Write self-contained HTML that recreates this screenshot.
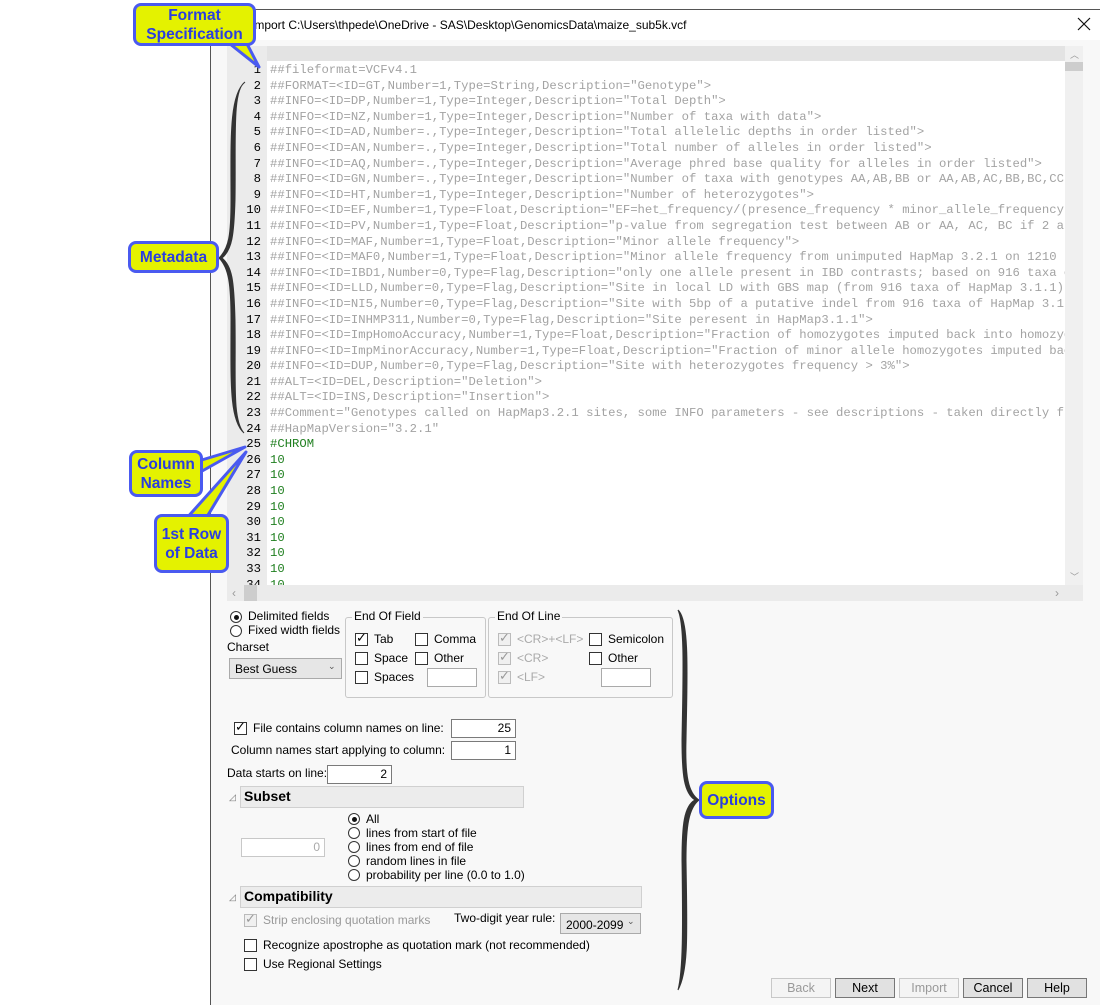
<!DOCTYPE html>
<html><head><meta charset="utf-8">
<style>
*{margin:0;padding:0;box-sizing:border-box}
body{width:1100px;height:1005px;background:#fff;position:relative;overflow:hidden;font-family:"Liberation Sans",sans-serif;font-size:12px;color:#000}
.abs{position:absolute}
#win{left:210px;top:9px;width:890px;height:996px;border:1px solid #555;border-right:none;border-bottom:none;background:#f8f8f8}
#title{left:211px;top:10px;width:889px;height:30px;background:#fff;font-size:12px}
#gut{left:227px;top:46px;width:40px;height:539px;background:#ebebeb}
#hdr{left:267px;top:46px;width:798px;height:15px;background:#e3e3e3}
#txt{left:267px;top:61px;width:798px;height:524px;background:#fff;overflow:hidden}
.ln{position:absolute;font-family:"Liberation Mono",monospace;font-size:12.25px;line-height:15.6px;white-space:pre}
#nums{left:227px;top:63px;width:34px;text-align:right;color:#000;height:522px;overflow:hidden}
#code{left:270px;top:63px;color:#a3a3a3;width:795px;height:522px;overflow:hidden}
.g{color:#1f7f1f}
#vs{left:1065px;top:46px;width:18px;height:539px;background:#f0f0f0}
#hs{left:227px;top:585px;width:856px;height:16px;background:#ebebeb}
.cb{position:absolute;width:13px;height:13px;border:1px solid #333;background:#fff}
.cb.d{border-color:#bbb;background:#f0f0f0}
.rb{position:absolute;width:12px;height:12px;border:1px solid #333;border-radius:50%;background:#fff}
.rb.on::after{content:"";position:absolute;left:2.5px;top:2.5px;width:5px;height:5px;border-radius:50%;background:#111}
.t{position:absolute;white-space:nowrap}
.inp{position:absolute;background:#fff;border:1px solid #7a7a7a;text-align:right;padding-right:4px;font-size:12px;line-height:16px}
.grp{position:absolute;border:1px solid #c8c8c8;border-radius:3px}
.btn{position:absolute;width:60px;height:20px;border:1px solid #777;background:#e1e1e1;text-align:center;font-size:12.5px;line-height:18px}
.btn.dis{border-color:#c8c8c8;background:#f4f4f4;color:#999}
.sec{position:absolute;background:#ececec;border:1px solid #d0d0d0;font-weight:bold;font-size:14px;line-height:19px;padding-left:3px}
.tri{position:absolute;font-size:9px;color:#777}
.co{position:absolute;background:#e4f200;border:3px solid #4a5af0;border-radius:8px;color:#2a3ee0;font-weight:bold;font-size:15.5px;text-align:center;line-height:19px;display:flex;align-items:center;justify-content:center}
</style></head><body>
<div id="win" class="abs"></div>
<div id="title" class="abs"><span class="t" style="left:40px;top:8px">Import C:\Users\thpede\OneDrive - SAS\Desktop\GenomicsData\maize_sub5k.vcf</span>
<svg class="abs" style="left:866px;top:7px" width="14" height="14"><path d="M1,1 L13,13 M13,1 L1,13" stroke="#111" stroke-width="1.2"/></svg></div>
<div id="gut" class="abs"></div>
<div id="hdr" class="abs"></div>
<div id="txt" class="abs"></div>
<div id="vs" class="abs"><div class="abs" style="left:0;top:16px;width:18px;height:9px;background:#cdcdcd"></div><span class="t" style="left:5px;top:2px;font-size:9px;color:#999">︿</span><span class="t" style="left:5px;top:524px;font-size:9px;color:#999">﹀</span></div>
<div id="hs" class="abs"><div class="abs" style="left:17px;top:0;width:13px;height:16px;background:#cdcdcd"></div><span class="t" style="left:5px;top:1px;color:#999">‹</span><span class="t" style="left:828px;top:1px;color:#999">›</span></div>
<div id="nums" class="ln">1
2
3
4
5
6
7
8
9
10
11
12
13
14
15
16
17
18
19
20
21
22
23
24
25
26
27
28
29
30
31
32
33
34</div>
<div id="code" class="ln">##fileformat=VCFv4.1
##FORMAT=&lt;ID=GT,Number=1,Type=String,Description="Genotype"&gt;
##INFO=&lt;ID=DP,Number=1,Type=Integer,Description="Total Depth"&gt;
##INFO=&lt;ID=NZ,Number=1,Type=Integer,Description="Number of taxa with data"&gt;
##INFO=&lt;ID=AD,Number=.,Type=Integer,Description="Total allelelic depths in order listed"&gt;
##INFO=&lt;ID=AN,Number=.,Type=Integer,Description="Total number of alleles in order listed"&gt;
##INFO=&lt;ID=AQ,Number=.,Type=Integer,Description="Average phred base quality for alleles in order listed"&gt;
##INFO=&lt;ID=GN,Number=.,Type=Integer,Description="Number of taxa with genotypes AA,AB,BB or AA,AB,AC,BB,BC,CC in order"&gt;
##INFO=&lt;ID=HT,Number=1,Type=Integer,Description="Number of heterozygotes"&gt;
##INFO=&lt;ID=EF,Number=1,Type=Float,Description="EF=het_frequency/(presence_frequency * minor_allele_frequency)"&gt;
##INFO=&lt;ID=PV,Number=1,Type=Float,Description="p-value from segregation test between AB or AA, AC, BC if 2 alleles"&gt;
##INFO=&lt;ID=MAF,Number=1,Type=Float,Description="Minor allele frequency"&gt;
##INFO=&lt;ID=MAF0,Number=1,Type=Float,Description="Minor allele frequency from unimputed HapMap 3.2.1 on 1210 taxa"&gt;
##INFO=&lt;ID=IBD1,Number=0,Type=Flag,Description="only one allele present in IBD contrasts; based on 916 taxa of"&gt;
##INFO=&lt;ID=LLD,Number=0,Type=Flag,Description="Site in local LD with GBS map (from 916 taxa of HapMap 3.1.1)"&gt;
##INFO=&lt;ID=NI5,Number=0,Type=Flag,Description="Site with 5bp of a putative indel from 916 taxa of HapMap 3.1.1"&gt;
##INFO=&lt;ID=INHMP311,Number=0,Type=Flag,Description="Site peresent in HapMap3.1.1"&gt;
##INFO=&lt;ID=ImpHomoAccuracy,Number=1,Type=Float,Description="Fraction of homozygotes imputed back into homozygotes"&gt;
##INFO=&lt;ID=ImpMinorAccuracy,Number=1,Type=Float,Description="Fraction of minor allele homozygotes imputed back"&gt;
##INFO=&lt;ID=DUP,Number=0,Type=Flag,Description="Site with heterozygotes frequency &gt; 3%"&gt;
##ALT=&lt;ID=DEL,Description="Deletion"&gt;
##ALT=&lt;ID=INS,Description="Insertion"&gt;
##Comment="Genotypes called on HapMap3.2.1 sites, some INFO parameters - see descriptions - taken directly from"
##HapMapVersion="3.2.1"
<span class="g">#CHROM
10
10
10
10
10
10
10
10
10</span></div>

<div class="rb on" style="left:230px;top:611px"></div><span class="t" style="left:248px;top:609px">Delimited fields</span>
<div class="rb" style="left:230px;top:625px"></div><span class="t" style="left:248px;top:623px">Fixed width fields</span>
<span class="t" style="left:227px;top:640px">Charset</span>
<div class="abs" style="left:229px;top:658px;width:113px;height:21px;border:1px solid #aaa;background:#e6e6e6"><span class="t" style="left:5px;top:3px">Best Guess</span><span class="t" style="left:98px;top:2px;font-size:9px;color:#555">⌄</span></div>

<div class="grp" style="left:345px;top:617px;width:141px;height:81px"></div>
<span class="t" style="left:352px;top:609px;background:#f8f8f8;padding:0 2px">End Of Field</span>
<div class="cb" style="left:355px;top:633px"></div><span class="t" style="left:356px;top:630px;font-size:13px">✓</span><span class="t" style="left:374px;top:632px">Tab</span>
<div class="cb" style="left:415px;top:633px"></div><span class="t" style="left:434px;top:632px">Comma</span>
<div class="cb" style="left:355px;top:652px"></div><span class="t" style="left:374px;top:651px">Space</span>
<div class="cb" style="left:415px;top:652px"></div><span class="t" style="left:434px;top:651px">Other</span>
<div class="cb" style="left:355px;top:671px"></div><span class="t" style="left:374px;top:670px">Spaces</span>
<div class="inp" style="left:427px;top:668px;width:50px;height:19px;border-color:#aaa"></div>

<div class="grp" style="left:488px;top:617px;width:185px;height:81px"></div>
<span class="t" style="left:495px;top:609px;background:#f8f8f8;padding:0 2px">End Of Line</span>
<div class="cb d" style="left:498px;top:633px"></div><span class="t" style="left:499px;top:630px;font-size:13px;color:#999">✓</span><span class="t" style="left:517px;top:632px;color:#aaa">&lt;CR&gt;+&lt;LF&gt;</span>
<div class="cb" style="left:589px;top:633px"></div><span class="t" style="left:608px;top:632px">Semicolon</span>
<div class="cb d" style="left:498px;top:652px"></div><span class="t" style="left:499px;top:649px;font-size:13px;color:#999">✓</span><span class="t" style="left:517px;top:651px;color:#aaa">&lt;CR&gt;</span>
<div class="cb" style="left:589px;top:652px"></div><span class="t" style="left:608px;top:651px">Other</span>
<div class="cb d" style="left:498px;top:671px"></div><span class="t" style="left:499px;top:668px;font-size:13px;color:#999">✓</span><span class="t" style="left:517px;top:670px;color:#aaa">&lt;LF&gt;</span>
<div class="inp" style="left:601px;top:668px;width:50px;height:19px;border-color:#aaa"></div>

<div class="cb" style="left:234px;top:722px"></div><span class="t" style="left:235px;top:719px;font-size:13px">✓</span>
<span class="t" style="left:253px;top:721px">File contains column names on line:</span>
<div class="inp" style="left:451px;top:719px;width:65px;height:19px">25</div>
<span class="t" style="left:231px;top:743px">Column names start applying to column:</span>
<div class="inp" style="left:451px;top:741px;width:65px;height:19px">1</div>
<span class="t" style="left:227px;top:766px">Data starts on line:</span>
<div class="inp" style="left:327px;top:765px;width:65px;height:19px">2</div>

<span class="tri" style="left:229px;top:792px">◿</span>
<div class="sec" style="left:240px;top:786px;width:284px;height:22px">Subset</div>
<div class="rb on" style="left:348px;top:813px"></div><span class="t" style="left:366px;top:812px">All</span>
<div class="rb" style="left:348px;top:827px"></div><span class="t" style="left:366px;top:826px">lines from start of file</span>
<div class="rb" style="left:348px;top:841px"></div><span class="t" style="left:366px;top:840px">lines from end of file</span>
<div class="rb" style="left:348px;top:855px"></div><span class="t" style="left:366px;top:854px">random lines in file</span>
<div class="rb" style="left:348px;top:869px"></div><span class="t" style="left:366px;top:868px">probability per line (0.0 to 1.0)</span>
<div class="inp" style="left:241px;top:838px;width:84px;height:19px;border-color:#c8c8c8;color:#aaa">0</div>

<span class="tri" style="left:229px;top:892px">◿</span>
<div class="sec" style="left:240px;top:886px;width:402px;height:22px">Compatibility</div>
<div class="cb d" style="left:244px;top:914px"></div><span class="t" style="left:245px;top:911px;font-size:13px;color:#999">✓</span>
<span class="t" style="left:263px;top:913px;color:#999">Strip enclosing quotation marks</span>
<span class="t" style="left:454px;top:911px">Two-digit year rule:</span>
<div class="abs" style="left:560px;top:913px;width:81px;height:21px;border:1px solid #aaa;background:#e6e6e6"><span class="t" style="left:5px;top:4px">2000-2099</span><span class="t" style="left:66px;top:2px;font-size:9px;color:#555">⌄</span></div>
<div class="cb" style="left:244px;top:939px"></div><span class="t" style="left:263px;top:938px">Recognize apostrophe as quotation mark (not recommended)</span>
<div class="cb" style="left:244px;top:958px"></div><span class="t" style="left:263px;top:957px">Use Regional Settings</span>

<div class="btn dis" style="left:771px;top:978px">Back</div>
<div class="btn" style="left:835px;top:978px">Next</div>
<div class="btn dis" style="left:899px;top:978px">Import</div>
<div class="btn" style="left:963px;top:978px">Cancel</div>
<div class="btn" style="left:1027px;top:978px">Help</div>

<svg class="abs" style="left:0;top:0" width="1100" height="1005">
<g fill="#e4f200" stroke="#4a5af0" stroke-width="3" stroke-linejoin="round">
<polygon points="225,40 245,40 259,67"/>
<polygon points="195,462 195,475 245,447"/>
<polygon points="185,520 205,520 246,452"/>
</g>
<g fill="#333" stroke="#333" stroke-width="1">
<path d="M245,82 C232,90 236,140 235,200 C234,235 232,250 222,258 C232,266 234,280 235,320 C236,380 232,420 244,433 C229,420 231,380 231,320 C231,285 229,268 219,258 C229,248 231,235 231,200 C231,140 229,95 245,82Z"/>
<path d="M678,610 C690,620 687,680 686,740 C685,775 688,793 699,800 C689,808 686,825 686,860 C687,930 689,970 678,990 C683,970 683,930 682,860 C682,825 684,806 695,800 C684,793 682,775 682,740 C683,680 685,625 678,610Z"/>
</g>
</svg>
<div class="co" style="left:133px;top:3px;width:123px;height:43px">Format<br>Specification</div>
<div class="co" style="left:128px;top:241px;width:91px;height:32px">Metadata</div>
<div class="co" style="left:129px;top:450px;width:74px;height:47px">Column<br>Names</div>
<div class="co" style="left:154px;top:514px;width:75px;height:59px">1st Row<br>of Data</div>
<div class="co" style="left:699px;top:781px;width:75px;height:38px">Options</div>
</body></html>
